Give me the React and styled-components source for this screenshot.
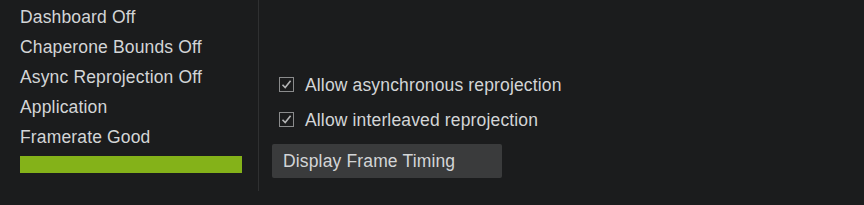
import React from 'react';
import styled, { createGlobalStyle } from 'styled-components';

const GlobalStyle = createGlobalStyle`
  html, body {
    margin: 0;
    padding: 0;
    background: #1b1c1d;
  }
  body {
    font-family: "Liberation Sans", Arial, sans-serif;
    font-size: 17.5px;
    letter-spacing: 0.15px;
    color: #d3d5d7;
  }
`;

const Page = styled.div`
  display: flex;
  width: 864px;
  height: 205px;
  background: #1b1c1d;
  overflow: hidden;
`;

const StatusColumn = styled.div`
  width: 222px;
  height: 189px;
  padding: 2px 16px 0 20px;
  border-right: 1px solid #2f3031;
`;

const StatusLine = styled.div`
  height: 30px;
  line-height: 30px;
  white-space: nowrap;
`;

const FrameBar = styled.div`
  height: 17px;
  margin-top: 4px;
  background: ${(props) => props.color};
`;

const SettingsColumn = styled.div`
  display: flex;
  flex-direction: column;
  padding: 75px 0 0 13px;
`;

const CheckRow = styled.label`
  display: flex;
  align-items: center;
  gap: 11px;
  height: 20px;
  line-height: 20px;
  padding-left: 7px;
  margin-bottom: 15px;
  white-space: nowrap;
`;

const Box = styled.span`
  box-sizing: border-box;
  width: 15px;
  height: 15px;
  border: 1px solid #8a8b8c;
  background: #1b1c1d;
  display: flex;
  align-items: center;
  justify-content: center;
  margin-top: -2px;
`;

const TimingButton = styled.button`
  box-sizing: border-box;
  width: 230px;
  height: 34px;
  margin-top: -1px;
  padding: 0 11px;
  border: none;
  border-radius: 2px;
  background: #3a3b3c;
  color: #d3d5d7;
  font-family: inherit;
  font-size: inherit;
  letter-spacing: inherit;
  text-align: left;
`;

const statusLines = [
  'Dashboard Off',
  'Chaperone Bounds Off',
  'Async Reprojection Off',
  'Application',
  'Framerate Good',
];

const CheckBox = ({ label }) => (
  <CheckRow>
    <Box>
      <svg width="11" height="11" viewBox="0 0 11 11">
        <path d="M1.5 5.8 L4.2 8.6 L9.6 1.8" fill="none" stroke="#b4b5b6" strokeWidth="1.6" />
      </svg>
    </Box>
    {label}
  </CheckRow>
);

export default function App() {
  return (
    <>
      <GlobalStyle />
      <Page>
        <StatusColumn>
          {statusLines.map((line) => (
            <StatusLine key={line}>{line}</StatusLine>
          ))}
          <FrameBar color="#84b219" />
        </StatusColumn>
        <SettingsColumn>
          <CheckBox label="Allow asynchronous reprojection" />
          <CheckBox label="Allow interleaved reprojection" />
          <TimingButton>Display Frame Timing</TimingButton>
        </SettingsColumn>
      </Page>
    </>
  );
}
